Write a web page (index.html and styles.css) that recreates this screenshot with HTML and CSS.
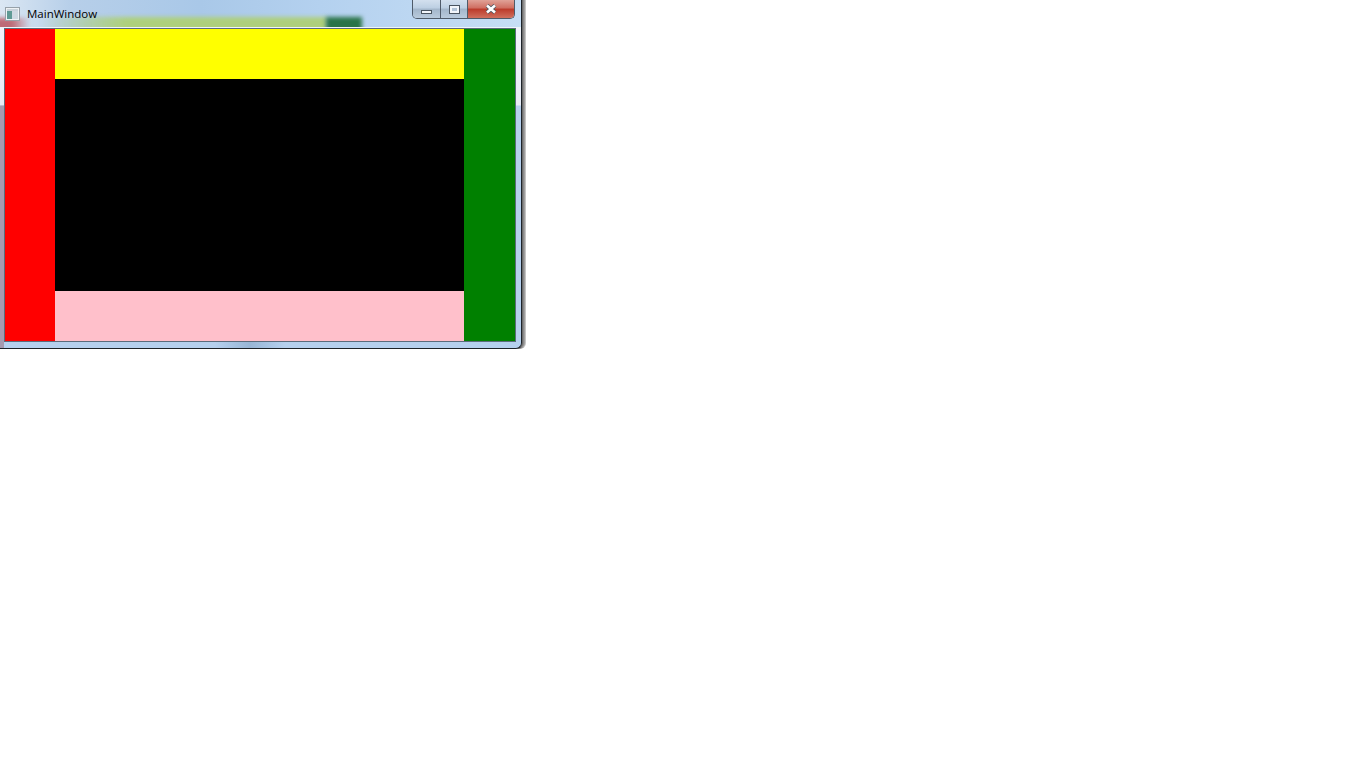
FILE: index.html

```html
<!DOCTYPE html>
<html lang="en">
<head>
  <meta charset="UTF-8">
  <title>MainWindow</title>
  <link rel="stylesheet" href="styles.css">
</head>
<body>
  <div class="window">
    <div class="titlebar">
      <!-- blurred desktop showing through the glass -->
      <div class="glass">
        <div class="blob blob-red"></div>
        <div class="blob blob-lime"></div>
        <div class="blob blob-green"></div>
      </div>
      <div class="title">
        <svg class="app-icon" width="16" height="16" viewBox="0 0 16 16">
          <rect x="0.5" y="1.5" width="14" height="13" fill="#eef2f5" stroke="#97a1a9"/>
          <rect x="2" y="3" width="11" height="2" fill="#c9d3db"/>
          <rect x="2" y="5" width="5" height="8" fill="#5f9a94"/>
          <rect x="7" y="5" width="6" height="8" fill="#cfd9e2"/>
        </svg>
        <span class="title-text">MainWindow</span>
      </div>
      <div class="caption-buttons">
        <div class="caption-btn btn-min"><span class="min-glyph"></span></div>
        <div class="caption-btn btn-max"><span class="max-glyph"></span></div>
        <div class="caption-btn btn-close">
          <svg width="12" height="10" viewBox="0 0 12 10">
            <path d="M2 1.5 L10 8.5 M10 1.5 L2 8.5" stroke="#4a5560" stroke-width="4.2"/>
            <path d="M2 1.5 L10 8.5 M10 1.5 L2 8.5" stroke="#ffffff" stroke-width="2.6"/>
          </svg>
        </div>
      </div>
    </div>
    <div class="client">
      <div class="dock-left"></div>
      <div class="dock-top"></div>
      <div class="dock-center"></div>
      <div class="dock-bottom"></div>
      <div class="dock-right"></div>
    </div>
  </div>
</body>
</html>
```

FILE: styles.css

```css
html, body {
  margin: 0;
  padding: 0;
  background: #ffffff;
}

.window {
  width: 522px;
  height: 349px;
  box-sizing: border-box;
  padding: 0 5px 6px 4px;
  display: flex;
  flex-direction: column;
  border-right: 1px solid #1d2329;
  border-bottom: 1px solid #1d2329;
  border-bottom-right-radius: 6px;
  box-shadow: 1px 0 0 #6d6d6d, 2px 0 0 #8a8a8a, 3px 0 0 #a0a0a0, 4px 0 0 #c4c4c4;
  background:
    linear-gradient(to right, transparent 215px, #98b6d6 250px, transparent 285px) 0 100% / 100% 6px no-repeat,
    linear-gradient(to bottom, transparent 105px, #a59ab0 106px) 0 0 / 4px 100% no-repeat,
    linear-gradient(to bottom, #f4f6fb 0, #e6ebf4 105px, #b5d0ee 106px, #b5d0ee 100%);
}

.titlebar {
  flex: none;
  height: 28px;
  box-sizing: border-box;
  margin: 0 -5px 0 -4px;
  padding-left: 5px;
  position: relative;
  display: flex;
  justify-content: space-between;
  align-items: flex-start;
  border-bottom: 1px solid #eef4fa;
  background: linear-gradient(to right, #dbe7f3 0, #b7cfe9 70px, #a9c8e8 200px, #b4d1ef 320px, #c6def5 100%);
}

.glass {
  position: absolute;
  inset: 0;
  overflow: hidden;
}

.blob {
  position: absolute;
  filter: blur(2px);
}

.blob-red {
  left: -6px;
  top: 18px;
  width: 36px;
  height: 16px;
  background: linear-gradient(to right, #bd6a76 50%, rgba(189, 106, 118, 0));
}

.blob-lime {
  left: 40px;
  top: 17px;
  width: 287px;
  height: 16px;
  background: linear-gradient(to right, rgba(174, 208, 124, 0), #aed07c 30%, #aecf7c);
}

.blob-green {
  left: 326px;
  top: 17px;
  width: 36px;
  height: 16px;
  background: #2a7348;
}

.title {
  position: relative;
  display: flex;
  align-items: center;
  gap: 6px;
  height: 14px;
  margin-top: 7px;
}

.app-icon {
  flex: none;
}

.title-text {
  margin-bottom: 2px;
  font-family: "Open Sans", "Liberation Sans", sans-serif;
  font-size: 11.5px;
  color: #000000;
}

.caption-buttons {
  position: relative;
  display: flex;
  width: 103px;
  height: 19px;
  margin-right: 6px;
  box-sizing: border-box;
  border: 1px solid #4f5b69;
  border-top: none;
  border-radius: 0 0 5px 5px;
  overflow: hidden;
}

.caption-btn {
  box-sizing: border-box;
  display: flex;
  align-items: center;
  justify-content: center;
  background: linear-gradient(to bottom, #d3e0ee 0, #bccfe2 45%, #a3b6ca 50%, #b9cbdc 100%);
}

.btn-min {
  width: 28px;
  border-right: 1px solid #4f5b69;
}

.btn-max {
  width: 27px;
  border-right: 1px solid #4f5b69;
}

.btn-close {
  flex: 1;
  background: linear-gradient(to bottom, #e0a297 0, #cf6d60 45%, #bb3a2a 50%, #d0705e 100%);
}

.min-glyph {
  width: 9px;
  height: 2px;
  margin-top: 5px;
  background: #f2f6fa;
  border: 1px solid #4a5560;
}

.max-glyph {
  width: 5px;
  height: 3px;
  background: #b3c4d6;
  border: 2px solid #f2f6fa;
  outline: 1px solid #4a5560;
}

.client {
  flex: none;
  display: grid;
  grid-template-columns: 50px 409px 51px;
  grid-template-rows: 50px 212px 50px;
  border: 1px solid #5b6b7c;
}

.dock-left {
  grid-row: 1 / 4;
  background: #ff0000;
}

.dock-top {
  background: #ffff00;
}

.dock-center {
  grid-column: 2;
  background: #000000;
}

.dock-bottom {
  grid-column: 2;
  background: #ffc0cb;
}

.dock-right {
  grid-column: 3;
  grid-row: 1 / 4;
  background: #008000;
}
```
